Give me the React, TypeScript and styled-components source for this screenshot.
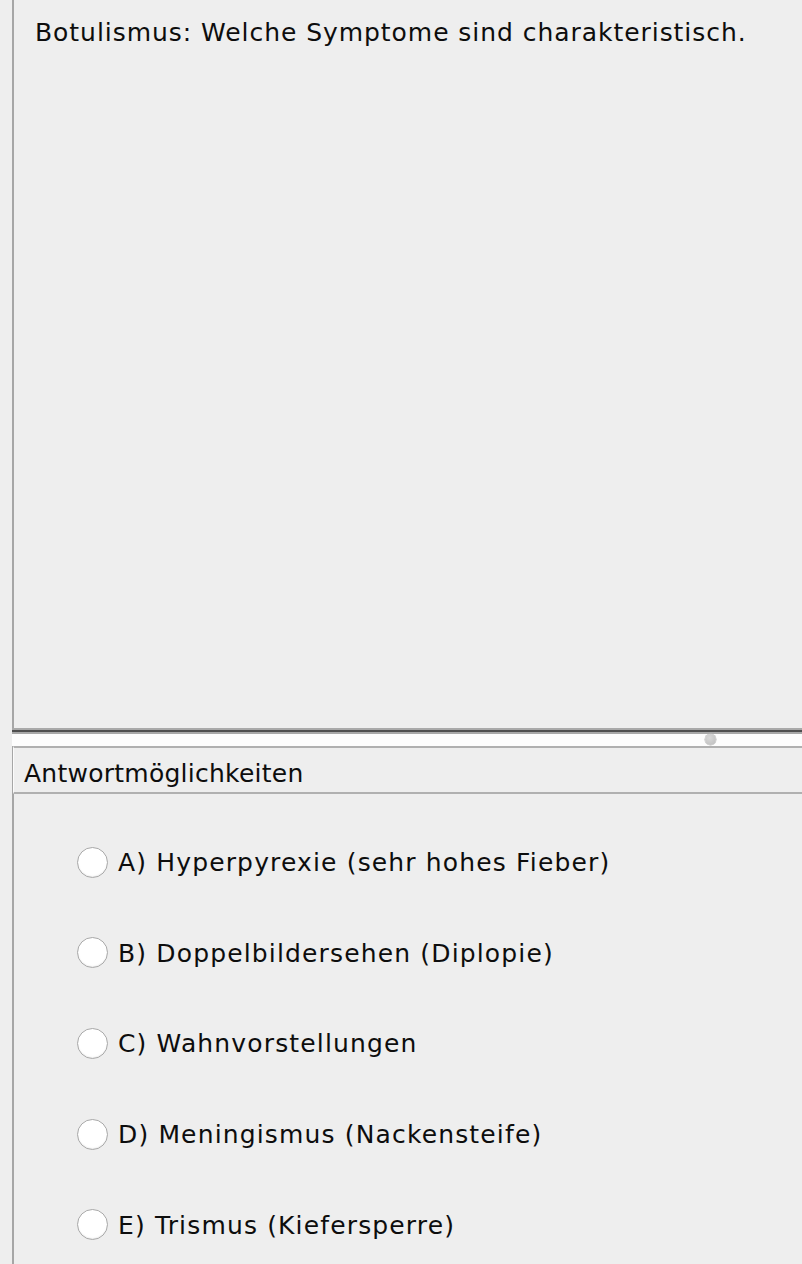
import React from 'react';
import styled, { createGlobalStyle } from 'styled-components';

const GlobalStyle = createGlobalStyle`
    html, body {
        margin: 0;
        padding: 0;
        background: #eeeeee;
    }
    body {
        font-family: "DejaVu Sans", "Liberation Sans", sans-serif;
        color: #0d0d0d;
    }
`;

const Window = styled.div`
    display: flex;
    flex-direction: column;
    height: 1264px;
    padding-left: 12px;
    box-sizing: border-box;
    overflow: hidden;
`;

const QuestionPanel = styled.div`
    height: 728px;
    border-left: 2px solid #a6a6a6;
    padding: 19px 0 0 21px;
    box-sizing: border-box;
`;

const QuestionText = styled.p`
    margin: 0;
    font-size: 25px;
    line-height: 28px;
    letter-spacing: 0.95px;
`;

// the split pane divider with its little drag knob
const Divider = styled.div`
    position: relative;
    height: 18px;
    border-top: 2px solid #a9a9a9;
    box-sizing: border-box;
    background: linear-gradient(
        to bottom,
        #4f4f4f 0px,
        #4f4f4f 2px,
        #a8a8a8 2px,
        #a8a8a8 4px,
        #fdfdfd 4px,
        #fdfdfd 16px
    );
`;

const Knob = styled.span`
    position: absolute;
    left: 693px;
    top: 4px;
    width: 11px;
    height: 11px;
    border-radius: 50%;
    background: radial-gradient(circle at 40% 35%, #d8d8d8, #bcbcbc);
    box-shadow: 0 0 0 0.5px #b8b8b8;
`;

const AnswerPanel = styled.div`
    flex: 1;
    display: flex;
    flex-direction: column;
    border-left: 2px solid #a6a6a6;
`;

const AnswerHeader = styled.div`
    height: 48px;
    box-sizing: border-box;
    border-top: 2px solid #b0b0b0;
    border-bottom: 2px solid #b0b0b0;
    border-left: 1px solid #fbfbfb;
    margin-left: -1px;
    padding: 12px 0 0 10px;
    font-size: 25px;
    line-height: 28px;
    letter-spacing: 0.25px;
`;

const OptionList = styled.div`
    display: flex;
    flex-direction: column;
    gap: 58.7px;
    padding: 52px 0 0 63px;
`;

const Option = styled.label`
    display: flex;
    align-items: center;
    gap: 10px;
    height: 32px;
    font-size: 25px;
    line-height: 28px;
    letter-spacing: 1.15px;
`;

const Radio = styled.input`
    appearance: none;
    margin: 0;
    width: 31px;
    height: 31px;
    flex-shrink: 0;
    border-radius: 50%;
    border: 1px solid #a9a9a9;
    background: radial-gradient(circle at 50% 45%, #ffffff 60%, #f4f4f4 100%);
    box-shadow: inset 0 -1px 1px rgba(0, 0, 0, 0.06);
`;

const OptionText = styled.span`
    position: relative;
    top: 1px;
`;

const options = [
    'A) Hyperpyrexie (sehr hohes Fieber)',
    'B) Doppelbildersehen (Diplopie)',
    'C) Wahnvorstellungen',
    'D) Meningismus (Nackensteife)',
    'E) Trismus (Kiefersperre)',
];

export default function App() {
    return (
        <>
            <GlobalStyle />
            <Window>
                <QuestionPanel>
                    <QuestionText>Botulismus: Welche Symptome sind charakteristisch.</QuestionText>
                </QuestionPanel>
                <Divider>
                    <Knob />
                </Divider>
                <AnswerPanel>
                    <AnswerHeader>Antwortmöglichkeiten</AnswerHeader>
                    <OptionList>
                        {options.map((text) => (
                            <Option key={text}>
                                <Radio type="radio" name="answer" />
                                <OptionText>{text}</OptionText>
                            </Option>
                        ))}
                    </OptionList>
                </AnswerPanel>
            </Window>
        </>
    );
}
